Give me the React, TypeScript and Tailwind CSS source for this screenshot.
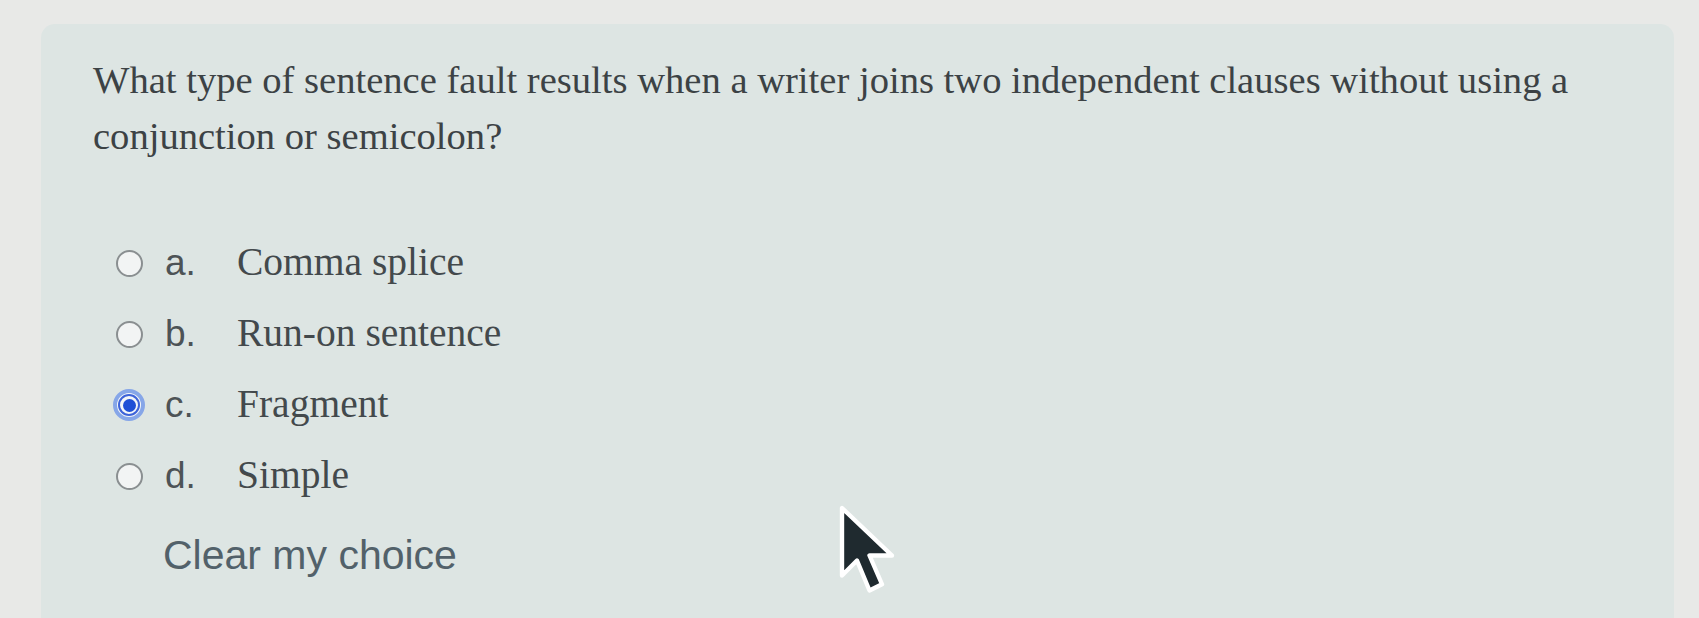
import React from "react"

const options = [
  { letter: "a.", text: "Comma splice", checked: false },
  { letter: "b.", text: "Run-on sentence", checked: false },
  { letter: "c.", text: "Fragment", checked: true },
  { letter: "d.", text: "Simple", checked: false },
]

function Radio({ checked }: { checked: boolean }) {
  if (checked) {
    return (
      <span className="flex h-[32px] w-[32px] items-center justify-center rounded-full border-[4px] border-[#86a6e8] bg-[#f4f6f8]">
        <span className="flex h-[22px] w-[22px] items-center justify-center rounded-full border-2 border-[#3d63d9] bg-[#f4f6f8]">
          <span className="h-[13px] w-[13px] rounded-full bg-[#1e4fd6]" />
        </span>
      </span>
    )
  }
  return <span className="block h-[27px] w-[27px] rounded-full border-2 border-[#8a8f91] bg-[#f2f4f4]" />
}

function Cursor() {
  return (
    <svg width="80" height="100" viewBox="0 0 60 80" className="absolute left-[832px] top-[503px]">
      <path d="M6 4 L6 58 L18 46 L28 70 L38 65 L28 42 L46 42 Z" fill="#1f2a2f" stroke="#ffffff" strokeWidth="3.5" strokeLinejoin="round" />
    </svg>
  )
}

export default function App() {
  return (
    <div className="relative h-[618px] w-[1699px] overflow-hidden bg-[#e8e9e7] pl-[41px] pt-[24px] pr-[25px]">
      <div className="h-[640px] rounded-[14px] bg-[#dde5e3] pl-[52px] pt-[28px]">
        <p className="w-[1560px] text-[38.6px] leading-[56px] text-[#3c4245]" style={{ fontFamily: '"Liberation Serif", serif' }}>
          What type of sentence fault results when a writer joins two independent clauses without using a conjunction or semicolon?
        </p>
        <ul className="mt-[74px] flex flex-col gap-[21px]">
          {options.map((o) => (
            <li key={o.letter} className="flex h-[50px] items-center">
              <span className="flex w-[72px] items-center justify-center">
                <Radio checked={o.checked} />
              </span>
              <span className="w-[72px] text-[37px] text-[#4d5356]" style={{ fontFamily: '"Liberation Sans", sans-serif' }}>
                {o.letter}
              </span>
              <span className="text-[39.5px] text-[#43494c]" style={{ fontFamily: '"Liberation Serif", serif' }}>
                {o.text}
              </span>
            </li>
          ))}
        </ul>
        <p className="mt-[24px] pl-[70px] text-[41px] text-[#52616a]" style={{ fontFamily: '"Liberation Sans", sans-serif' }}>
          Clear my choice
        </p>
      </div>
      <Cursor />
    </div>
  )
}
